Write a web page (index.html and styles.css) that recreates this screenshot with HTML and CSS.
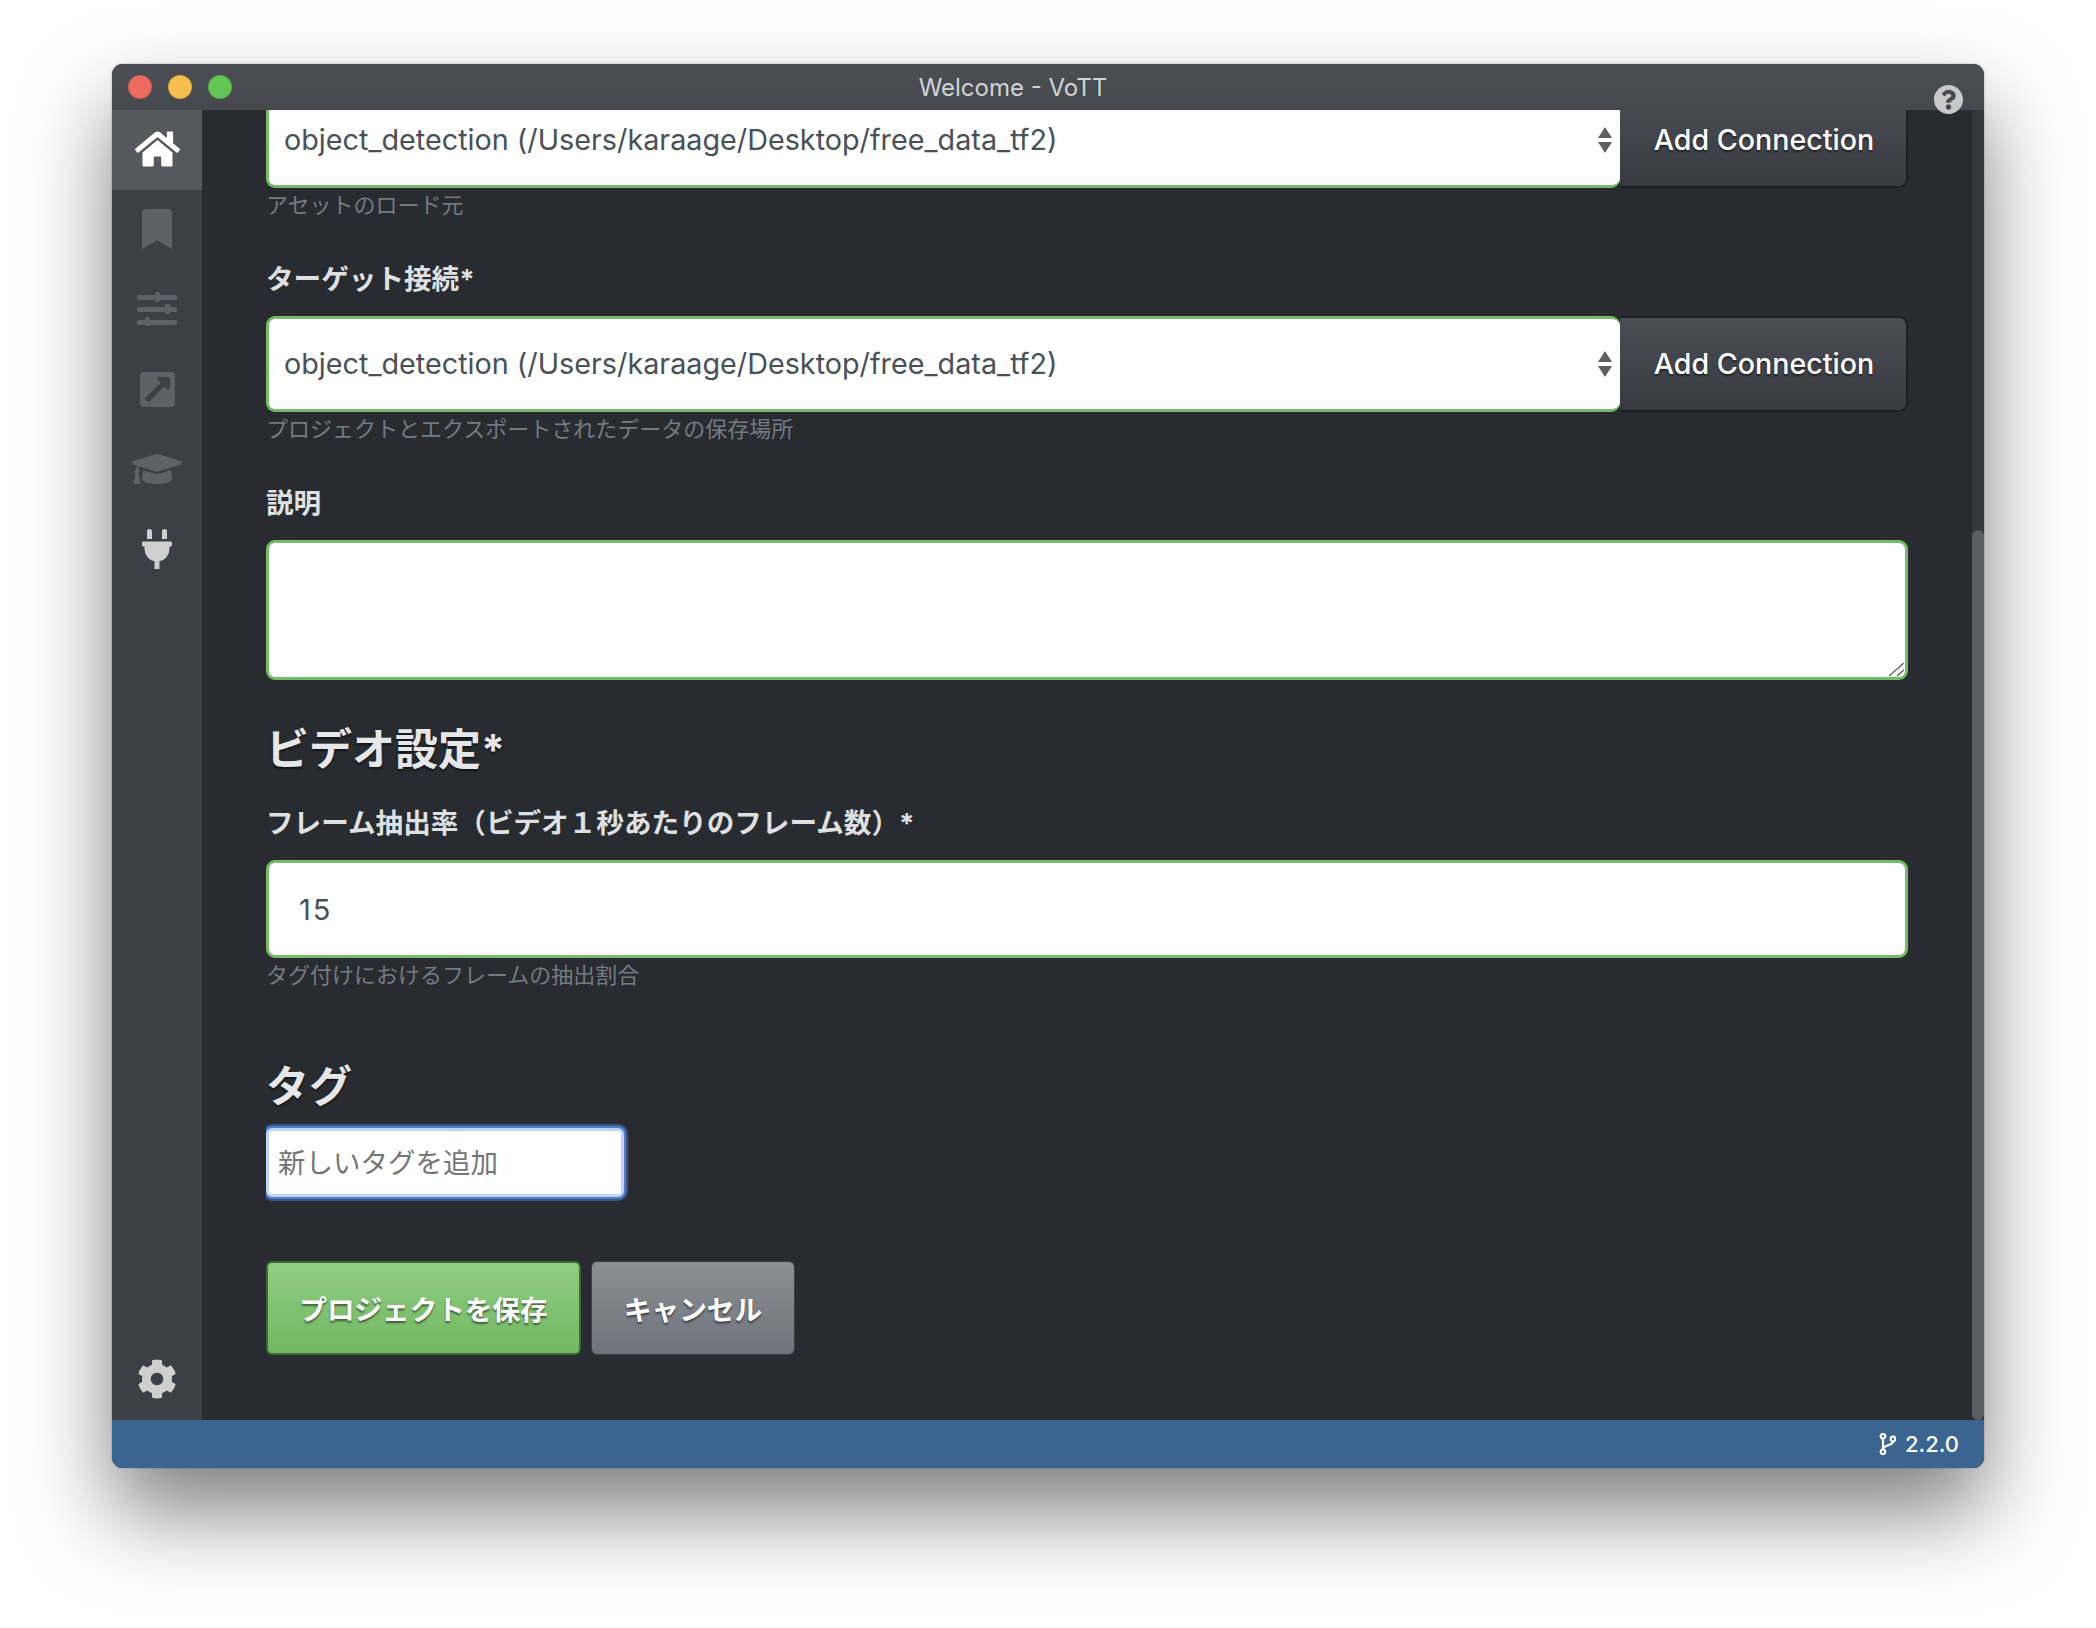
FILE: index.html
```html
<!DOCTYPE html>
<html lang="ja">
<head>
<meta charset="utf-8">
<title>Welcome - VoTT</title>
<link rel="stylesheet" href="styles.css">
</head>
<body>
<div class="window">
  <header class="titlebar">
    <div class="lights"><span class="light red"></span><span class="light yellow"></span><span class="light green"></span></div>
    <div class="title">Welcome - VoTT</div>
    <svg class="help" viewBox="8 8 496 496"><path fill="#c9c9c9" d="M504 256c0 136.997-111.043 248-248 248S8 392.997 8 256C8 119.083 119.043 8 256 8s248 111.083 248 248zM262.655 90c-54.497 0-89.255 22.957-116.549 63.758-3.536 5.286-2.353 12.415 2.715 16.258l34.699 26.31c5.205 3.947 12.621 3.008 16.665-2.122 17.864-22.658 30.113-35.797 57.303-35.797 20.429 0 45.698 13.148 45.698 32.958 0 14.976-12.363 22.667-32.534 33.976C247.128 238.528 216 254.941 216 296v4c0 6.627 5.373 12 12 12h56c6.627 0 12-5.373 12-12v-1.333c0-28.462 83.186-29.647 83.186-106.667 0-58.002-60.165-102-116.531-102zM256 338c-25.365 0-46 20.635-46 46 0 25.364 20.635 46 46 46s46-20.636 46-46c0-25.365-20.635-46-46-46z"/></svg>
  </header>
  <div class="body">
    <nav class="sidebar">
      <div class="nav-top">
        <a class="nav-item active"><svg class="i-home" viewBox="0 32 576 448"><path fill="currentColor" d="M280.37 148.26L96 300.11V464a16 16 0 0 0 16 16l112.06-.29a16 16 0 0 0 15.92-16V368a16 16 0 0 1 16-16h64a16 16 0 0 1 16 16v95.64a16 16 0 0 0 16 16.05L464 480a16 16 0 0 0 16-16V300L295.67 148.26a12.19 12.19 0 0 0-15.3 0zM571.6 251.47L488 182.56V44.05a12 12 0 0 0-12-12h-56a12 12 0 0 0-12 12v72.61L318.47 43a48 48 0 0 0-61 0L4.34 251.47a12 12 0 0 0-1.6 16.9l25.5 31A12 12 0 0 0 45.15 301l235.22-193.74a12.19 12.19 0 0 1 15.3 0L530.9 301a12 12 0 0 0 16.9-1.6l25.5-31a12 12 0 0 0-1.7-16.93z"/></svg></a>
        <a class="nav-item dim"><svg class="i-bookmark" viewBox="0 0 384 512"><path fill="currentColor" d="M0 512V48C0 21.49 21.49 0 48 0h288c26.51 0 48 21.49 48 48v464L192 400 0 512z"/></svg></a>
        <a class="nav-item dim"><svg class="i-sliders" viewBox="0 0 40 34"><g fill="currentColor"><rect x="0" y="3" width="40" height="5" rx="1.5"/><rect x="18" y="0" width="5" height="10" rx="1.5"/><rect x="0" y="15" width="40" height="5" rx="1.5"/><rect x="28" y="12" width="5" height="10" rx="1.5"/><rect x="0" y="28" width="40" height="5" rx="1.5"/><rect x="8" y="25" width="5" height="9" rx="1.5"/></g></svg></a>
        <a class="nav-item dim"><svg class="i-link" viewBox="0 32 448 448"><path fill="currentColor" d="M448 80v352c0 26.51-21.49 48-48 48H48c-26.51 0-48-21.49-48-48V80c0-26.51 21.49-48 48-48h352c26.51 0 48 21.49 48 48zm-88 16H248.029c-21.313 0-32.08 25.861-16.971 40.971l31.984 31.987L67.515 364.485c-4.686 4.686-4.686 12.284 0 16.971l31.029 31.029c4.687 4.686 12.285 4.686 16.971 0l195.526-195.526 31.988 31.991C357.058 263.977 384 253.425 384 231.979V120c0-13.255-10.745-24-24-24z"/></svg></a>
        <a class="nav-item dim"><svg class="i-cap" viewBox="0 64 640 384"><path fill="currentColor" d="M622.34 153.2L343.4 67.5c-15.2-4.67-31.6-4.67-46.79 0L17.66 153.2c-23.54 7.23-23.54 38.36 0 45.59l48.63 14.94c-10.67 13.19-17.23 29.28-17.88 46.9C38.78 266.15 32 276.11 32 288c0 10.78 5.68 19.85 13.86 25.65L20.33 428.53C18.11 438.52 25.71 448 35.94 448h56.11c10.24 0 17.84-9.48 15.62-19.47L82.14 313.65C90.32 307.85 96 298.78 96 288c0-11.57-6.47-21.25-15.66-26.87.76-15.02 8.44-28.3 20.69-36.72L296.6 284.5c9.06 2.78 26.44 6.25 46.79 0l278.95-85.7c23.55-7.24 23.55-38.36 0-45.6zM352.79 315.09c-28.53 8.76-52.84 3.92-65.59 0l-145.02-44.55L128 384c0 35.35 85.96 64 192 64s192-28.65 192-64l-14.18-113.47-145.03 44.56z"/></svg></a>
        <a class="nav-item"><svg class="i-plug" viewBox="0 0 384 512"><path fill="currentColor" d="M320,32a32,32,0,0,0-64,0v96h64Zm48,128H16A16,16,0,0,0,0,176v32a16,16,0,0,0,16,16H32v32A160.07,160.07,0,0,0,160,412.8V512h64V412.8A160.07,160.07,0,0,0,352,256V224h16a16,16,0,0,0,16-16V176A16,16,0,0,0,368,160ZM128,32a32,32,0,0,0-64,0v96h64Z"/></svg></a>
      </div>
      <a class="nav-item cog"><svg class="i-cog" viewBox="0 0 512 512"><path fill="currentColor" d="M487.4 315.7l-42.6-24.6c4.3-23.2 4.3-47 0-70.2l42.6-24.6c4.9-2.8 7.1-8.6 5.5-14-11.1-35.6-30-67.8-54.7-94.6-3.8-4.1-10-5.1-14.8-2.3L380.8 110c-17.9-15.4-38.5-27.3-60.8-35.1V25.8c0-5.6-3.9-10.5-9.4-11.7-36.7-8.2-74.3-7.8-109.2 0-5.5 1.2-9.4 6.1-9.4 11.7V75c-22.2 7.9-42.8 19.8-60.8 35.1L88.7 85.5c-4.9-2.8-11-1.9-14.8 2.3-24.7 26.7-43.6 58.9-54.7 94.6-1.7 5.4.6 11.2 5.5 14L67.3 221c-4.3 23.2-4.3 47 0 70.2l-42.6 24.6c-4.9 2.8-7.1 8.6-5.5 14 11.1 35.6 30 67.8 54.7 94.6 3.8 4.1 10 5.1 14.8 2.3l42.6-24.6c17.9 15.4 38.5 27.3 60.8 35.1v49.2c0 5.6 3.9 10.5 9.4 11.7 36.7 8.2 74.3 7.8 109.2 0 5.5-1.2 9.4-6.1 9.4-11.7v-49.2c22.2-7.9 42.8-19.8 60.8-35.1l42.6 24.6c4.9 2.8 11 1.9 14.8-2.3 24.7-26.7 43.6-58.9 54.7-94.6 1.5-5.5-.7-11.3-5.6-14.1zM256 336c-44.1 0-80-35.9-80-80s35.9-80 80-80 80 35.9 80 80-35.9 80-80 80z"/></svg></a>
    </nav>
    <main class="main">
      <form class="form">
        <div class="select-row first">
          <div class="select-wrap">
            <select class="select"><option>object_detection (/Users/karaage/Desktop/free_data_tf2)</option></select>
            <svg class="arrows" viewBox="0 0 14 26"><path fill="#5b5e62" d="M7 0l7 11H0zM7 26L0 15h14z"/></svg>
          </div>
          <button type="button" class="btn-add">Add Connection</button>
        </div>
        <small class="help-text">アセットのロード元</small>

        <label class="label">ターゲット接続*</label>
        <div class="select-row">
          <div class="select-wrap">
            <select class="select"><option>object_detection (/Users/karaage/Desktop/free_data_tf2)</option></select>
            <svg class="arrows" viewBox="0 0 14 26"><path fill="#5b5e62" d="M7 0l7 11H0zM7 26L0 15h14z"/></svg>
          </div>
          <button type="button" class="btn-add">Add Connection</button>
        </div>
        <small class="help-text">プロジェクトとエクスポートされたデータの保存場所</small>

        <label class="label">説明</label>
        <div class="textarea-wrap">
          <textarea class="textarea"></textarea>
          <svg class="grip" viewBox="0 0 15 13"><path fill="none" stroke="#555" stroke-width="1.3" d="M0 13L15 0M8 13L15 7"/></svg>
        </div>

        <h3 class="heading video">ビデオ設定*</h3>
        <label class="label tight">フレーム抽出率（ビデオ１秒あたりのフレーム数）*</label>
        <input class="text-input" type="text" value="15">
        <small class="help-text">タグ付けにおけるフレームの抽出割合</small>

        <h3 class="heading tags">タグ</h3>
        <div class="tag-wrap">
          <input class="tag-input" type="text" placeholder="新しいタグを追加">
        </div>

        <div class="actions">
          <button type="button" class="btn btn-save">プロジェクトを保存</button>
          <button type="button" class="btn btn-cancel">キャンセル</button>
        </div>
      </form>
      <div class="scroll-track"><div class="scroll-thumb"></div></div>
    </main>
  </div>
  <footer class="statusbar">
    <svg class="branch" viewBox="0 0 17 22"><g fill="none" stroke="#fff" stroke-width="2.2"><circle cx="4" cy="3.2" r="2.3"/><circle cx="4" cy="18.8" r="2.3"/><circle cx="14" cy="6" r="2.3"/><path d="M4 5.6v10.8M14 8.4c0 4-10 3.5-10 8"/></g></svg>
    <span class="version">2.2.0</span>
  </footer>
</div>
</body>
</html>
```
FILE: styles.css
```css
* { box-sizing: border-box; }
html, body { margin: 0; height: 100%; }
body {
  width: 2096px;
  height: 1628px;
  padding: 64px 112px 160px;
  background: #fff;
  font-family: Inter, "Noto Sans CJK JP", sans-serif;
  overflow: hidden;
}
.window {
  width: 1872px;
  height: 1404px;
  display: flex;
  flex-direction: column;
  border-radius: 11px;
  overflow: hidden;
  background: #282b30;
  box-shadow: 0 44px 85px rgba(0,0,0,.5), 0 0 2px rgba(0,0,0,.35);
}
.titlebar {
  position: relative;
  flex: 0 0 46px;
  padding: 2px 70px 0 0;
  background: linear-gradient(#4b4e53, #45484d);
  display: flex;
  align-items: center;
  justify-content: center;
}
.lights {
  position: absolute;
  left: 16px;
  top: 11px;
  display: flex;
  gap: 16px;
}
.light { width: 24px; height: 24px; border-radius: 50%; border: 1px solid rgba(0,0,0,.12); }
.red { background: #ec6b5f; }
.yellow { background: #f5bf4f; }
.green { background: #62c554; }
.title { color: #d2d3d4; font-size: 24px; line-height: 44px; }
.help {
  position: absolute;
  z-index: 3;
  right: 21px;
  top: 21px;
  width: 29px;
  height: 29px;
}
.body { flex: 1; display: flex; min-height: 0; }
.sidebar {
  flex: 0 0 90px;
  background: #3c3f45;
  display: flex;
  flex-direction: column;
  justify-content: space-between;
}
.nav-top { display: flex; flex-direction: column; }
.nav-item {
  height: 80px;
  padding-bottom: 2px;
  display: flex;
  align-items: center;
  justify-content: center;
  color: #cfcfcf;
}
.nav-item.active { background: #56585d; color: #fff; }
.nav-item.dim { color: #5f6165; }
.i-home { width: 45px; height: 36px; }
.i-bookmark { width: 30px; height: 40px; }
.i-sliders { width: 40px; height: 34px; }
.i-link { width: 35px; height: 35px; }
.i-cap { width: 50px; height: 30px; }
.i-plug { width: 30px; height: 40px; }
.i-cog { width: 40px; height: 40px; }
.main {
  flex: 1;
  min-width: 0;
  display: flex;
  overflow: hidden;
}
.form {
  flex: 1;
  min-width: 0;
  margin: 0;
  padding: 0 64px;
  display: block;
  font-size: 27.6px;
}
.scroll-track {
  flex: 0 0 12px;
  background: #33363b;
  display: flex;
  align-items: flex-end;
}
.scroll-thumb {
  width: 12px;
  height: 890px;
  background: #5b5d62;
  border-radius: 6px;
}
.select-row { display: flex; height: 96px; }
.select-row.first { margin-top: -18px; }
.select-wrap { position: relative; flex: 1; min-width: 0; }
.select {
  display: block;
  width: 100%;
  height: 100%;
  appearance: none;
  background: #fff;
  color: #495057;
  border: 3px solid #74bd65;
  border-right: 0;
  border-radius: 9px;
  padding: 0 0 1px 15px;
  font: inherit;
  font-size: 28.75px;
  outline: none;
}
.arrows {
  position: absolute;
  right: 8px;
  top: 35px;
  width: 14px;
  height: 26px;
}
.btn-add {
  flex: 0 0 288px;
  height: 100%;
  border: 2px solid #1d1f23;
  border-left: 0;
  border-radius: 0 9px 9px 0;
  background: linear-gradient(#4a4d53, #383b41);
  color: #fff;
  font: inherit;
  font-size: 28.6px;
  font-weight: 500;
  text-shadow: 0 2px 2px rgba(0,0,0,.5);
  padding: 0 0 2px 2px;
}
.help-text {
  display: block;
  font-size: 22px;
  line-height: 33px;
  color: #737b83;
  margin-top: 1px;
}
.label {
  display: block;
  line-height: 41px;
  font-weight: 700;
  color: #dfe0e2;
  margin-top: 37px;
  margin-bottom: 16px;
}
.label.tight { margin-top: 29px; margin-bottom: 16px; }
.textarea-wrap { position: relative; }
.textarea {
  display: block;
  width: 100%;
  height: 140px;
  border: 3px solid #74bd65;
  border-radius: 9px;
  background: #fff;
  resize: none;
  outline: none;
}
.grip {
  position: absolute;
  right: 4px;
  bottom: 4px;
  width: 15px;
  height: 13px;
}
.heading {
  margin: 0;
  font-size: 43px;
  line-height: 50px;
  font-weight: 700;
  color: #e6e7e8;
  text-shadow: 0 2px 2px rgba(0,0,0,.5);
}
.heading.video { margin-top: 44px; }
.heading.tags { margin-top: 69px; }
.text-input {
  display: block;
  width: 100%;
  height: 98px;
  border: 3px solid #74bd65;
  border-radius: 9px;
  background: #fff;
  color: #495057;
  font: inherit;
  font-size: 29px;
  letter-spacing: 2px;
  padding: 0 30px;
  outline: none;
}
.tag-wrap {
  width: 362px;
  margin-top: 13px;
  padding: 4px 4px 4px 0;
  overflow: hidden;
}
.tag-input {
  display: block;
  width: 358px;
  height: 69px;
  border: 3px solid #bcd4f8;
  border-radius: 6px;
  background: #fff;
  box-shadow: 0 0 0 2px #4f7dc8, 0 0 0 4px #3a5480;
  font: inherit;
  font-size: 27.5px;
  padding: 0 9px;
  outline: none;
}
.tag-input::placeholder { color: #757575; opacity: 1; }
.actions { display: flex; gap: 10px; margin-top: 60px; }
.btn {
  height: 94px;
  border-radius: 6px;
  color: #fff;
  font: inherit;
  font-weight: 700;
  text-shadow: 0 2px 2px rgba(0,0,0,.5);
}
.btn-save {
  width: 315px;
  border: 2px solid #3c6a34;
  background: linear-gradient(#90cd82, #72b761);
}
.btn-cancel {
  width: 204px;
  border: 1px solid #3b3e44;
  background: linear-gradient(#8b8f93, #6f747c);
}
.statusbar {
  flex: 0 0 48px;
  background: #3a6591;
  display: flex;
  align-items: center;
  justify-content: flex-end;
  padding-right: 25px;
  gap: 9px;
  color: #fff;
}
.branch { width: 17px; height: 22px; }
.version { font-size: 22px; font-weight: 500; line-height: 48px; }
```
